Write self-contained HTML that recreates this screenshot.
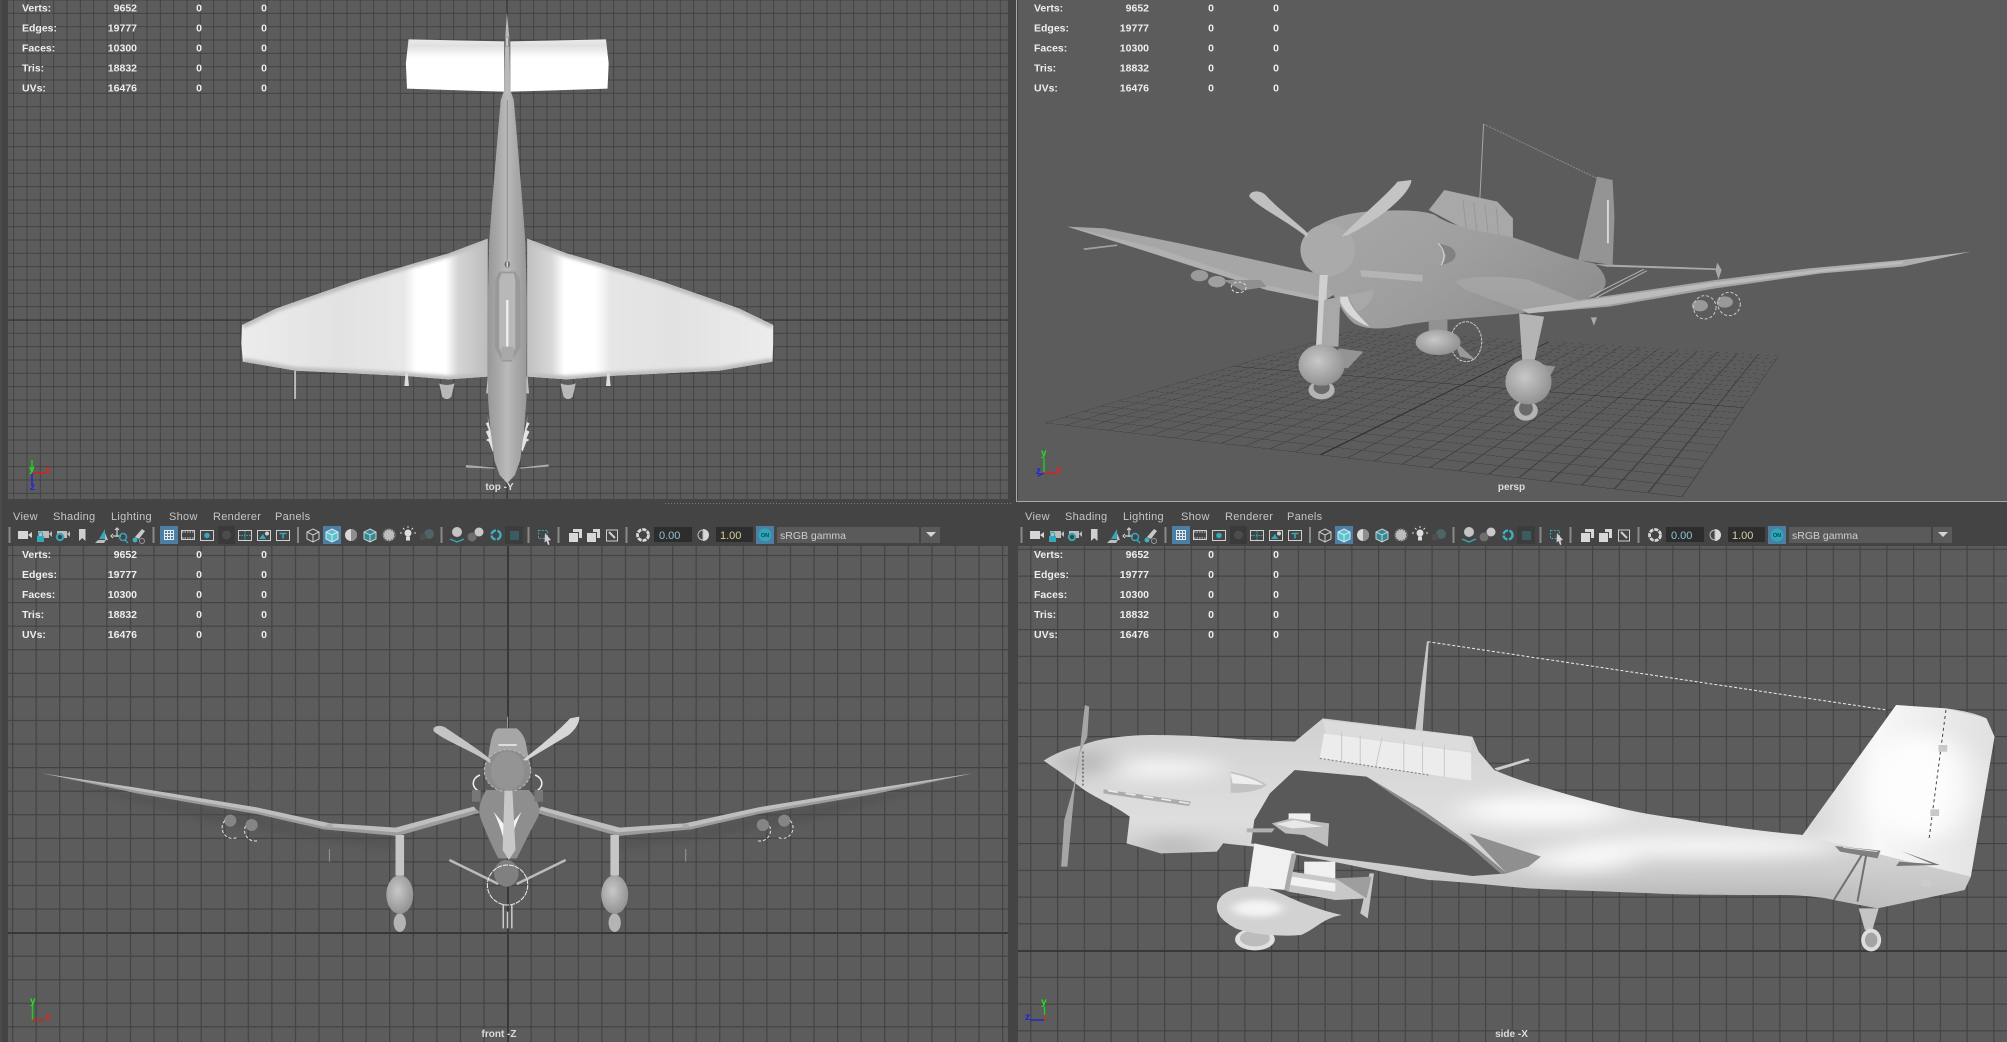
<!DOCTYPE html>
<html>
<head>
<meta charset="utf-8">
<title>Maya viewports</title>
<style>
html,body{margin:0;padding:0;width:2007px;height:1042px;overflow:hidden;background:#444;}
#vp{position:absolute;left:1018px;top:0;width:989px;height:501px;background:#5c5c5c;overflow:hidden;}
#floor{position:absolute;left:-1018px;top:0;width:721px;height:721px;transform-origin:0 0;
transform:matrix3d(1.4776,0.12597,0,0.00077333, 0.32958,-0.06139,0,-0.00033028, 0,0,1,0, 1044,423,0,1);
background-image:linear-gradient(90deg,#3e3e3e 1.7px,transparent 1.7px),linear-gradient(0deg,#3e3e3e 1.7px,transparent 1.7px);
background-size:30px 30px;background-position:0 0,0 1.7px;}
#floor i{position:absolute;background:#333;}
svg{position:absolute;left:0;top:0;}
text{font-family:"Liberation Sans",sans-serif;}
.s text,.s{font-size:10.5px;font-weight:bold;fill:#eee;}
.m{font-size:11px;fill:#c6c6c6;letter-spacing:.3px;}
.l{font-size:10px;font-weight:bold;fill:#ddd;text-anchor:middle;}
.ax{font-size:10px;font-weight:bold;}
</style>
</head>
<body>
<div id="vp"><div id="floor"><i style="left:359px;top:0;width:3px;height:721px"></i><i style="left:0;top:359px;width:721px;height:3px"></i></div></div>
<svg width="2007" height="1042" viewBox="0 0 2007 1042" xmlns="http://www.w3.org/2000/svg">
<defs>
<pattern id="g1" patternUnits="userSpaceOnUse" x="506.5" y="319.5" width="13.333" height="13.333"><rect width="1" height="13.333" fill="#434343"/><rect width="13.333" height="1" fill="#434343"/></pattern>
<pattern id="g2" patternUnits="userSpaceOnUse" x="507" y="932" width="23.57" height="23.57"><rect width="1.2" height="23.57" fill="#434343"/><rect width="23.57" height="1.2" fill="#434343"/></pattern>
<pattern id="g3" patternUnits="userSpaceOnUse" x="1057" y="950" width="26.75" height="26.75"><rect width="1.2" height="26.75" fill="#434343"/><rect width="26.75" height="1.2" fill="#434343"/></pattern>

<linearGradient id="wl" gradientUnits="userSpaceOnUse" x1="108" y1="0" x2="752" y2="0"><stop offset="0" stop-color="#ececec"/><stop offset=".4" stop-color="#e2e2e2"/><stop offset=".66" stop-color="#e8e8e8"/><stop offset=".71" stop-color="#fff"/><stop offset=".83" stop-color="#fff"/><stop offset=".88" stop-color="#d4d4d4"/><stop offset="1" stop-color="#bcbcbc"/></linearGradient>
<linearGradient id="wr" gradientUnits="userSpaceOnUse" x1="855" y1="0" x2="1498" y2="0"><stop offset="0" stop-color="#c0c0c0"/><stop offset=".1" stop-color="#d8d8d8"/><stop offset=".15" stop-color="#fff"/><stop offset=".28" stop-color="#fff"/><stop offset=".34" stop-color="#e6e6e6"/><stop offset=".6" stop-color="#e2e2e2"/><stop offset="1" stop-color="#ececec"/></linearGradient>
<linearGradient id="tp" gradientUnits="userSpaceOnUse" x1="0" y1="118" x2="0" y2="275"><stop offset="0" stop-color="#eaeaea"/><stop offset=".12" stop-color="#e0e0e0"/><stop offset=".35" stop-color="#fff"/><stop offset="1" stop-color="#fff"/></linearGradient>
<linearGradient id="fu" gradientUnits="userSpaceOnUse" x1="750" y1="0" x2="856" y2="0"><stop offset="0" stop-color="#979797"/><stop offset=".3" stop-color="#aaa"/><stop offset=".5" stop-color="#bbb"/><stop offset=".7" stop-color="#aaa"/><stop offset="1" stop-color="#979797"/></linearGradient>

<linearGradient id="pb" gradientUnits="userSpaceOnUse" x1="440" y1="330" x2="900" y2="680"><stop offset="0" stop-color="#a8a8a8"/><stop offset=".5" stop-color="#9e9e9e"/><stop offset="1" stop-color="#8c8c8c"/></linearGradient>
<linearGradient id="pw" gradientUnits="userSpaceOnUse" x1="0" y1="450" x2="0" y2="640"><stop offset="0" stop-color="#b4b4b4"/><stop offset=".5" stop-color="#a4a4a4"/><stop offset="1" stop-color="#a0a0a0"/></linearGradient>
<radialGradient id="sp" cx=".42" cy=".4" r=".7"><stop offset="0" stop-color="#c8c8c8"/><stop offset="1" stop-color="#8a8a8a"/></radialGradient>

<linearGradient id="sf" gradientUnits="userSpaceOnUse" x1="0" y1="280" x2="0" y2="860"><stop offset="0" stop-color="#d0d0d0"/><stop offset=".55" stop-color="#dedede"/><stop offset="1" stop-color="#c0c0c0"/></linearGradient>
<linearGradient id="sfin" gradientUnits="userSpaceOnUse" x1="1260" y1="0" x2="1548" y2="0"><stop offset="0" stop-color="#dadada"/><stop offset=".35" stop-color="#f8f8f8"/><stop offset="1" stop-color="#e0e0e0"/></linearGradient>
<filter id="bl" x="-30%" y="-60%" width="160%" height="220%"><feGaussianBlur stdDeviation="9"/></filter>
<filter id="bb" x="-20%" y="-30%" width="140%" height="160%"><feGaussianBlur stdDeviation="26"/></filter>
<filter id="bs" x="-10%" y="-30%" width="120%" height="160%"><feGaussianBlur stdDeviation="5"/></filter>
<clipPath id="sc"><path d="M22,422 C40,400 60,385 85,375 C110,355 150,347 190,345 C240,345 300,350 340,358 L425,365 L470,295 L710,350 L720,395 L745,450 C770,470 800,490 830,505 C900,545 970,580 1040,595 C1100,615 1180,635 1240,645 L1390,255 L1470,265 C1500,272 1520,282 1535,295 L1548,350 L1510,770 L1500,810 L1360,865 L1290,840 C1270,830 1230,825 1210,825 C1140,825 1050,825 1000,820 C930,815 860,810 800,805 C740,795 690,785 640,780 C590,765 540,745 500,730 L360,680 L310,670 L300,695 L210,700 L155,670 L160,590 C130,550 100,530 80,500 C60,470 40,445 22,422Z"/></clipPath>
<clipPath id="wcl"><path d="M110,975 L200,925 L400,845 L560,790 L650,760 L752,716 L752,1130 L650,1138 L540,1128 L250,1112 L112,1085 L108,1030 Z M1498,975 L1408,925 L1208,845 L1048,790 L958,760 L855,716 L855,1130 L958,1138 L1068,1128 L1358,1112 L1496,1085 L1498,1030 Z"/></clipPath>

<g id="tb">
 <g fill="#8a8a8a"><rect x="8.5" y="527" width="2" height="16"/><rect x="152.5" y="527" width="2" height="16"/><rect x="297" y="527" width="2" height="16"/><rect x="440.5" y="527" width="2" height="16"/><rect x="527.5" y="527" width="2" height="16"/><rect x="557.5" y="527" width="2" height="16"/><rect x="625.5" y="527" width="2" height="16"/></g>
 <path d="M18,531h10v8h-10z M28,535l4,-3v6z" fill="#d6d6d6"/>
 <path d="M38,531h11v7h-11z M49,534l3,-3v6z" fill="#bdbdbd"/>
 <path d="M37,536h7v6h-7z" fill="#36a7b8"/><path d="M38.5,536v-2a2,2 0 0 1 4,0v2" fill="none" stroke="#36a7b8" stroke-width="1.2"/>
 <path d="M57,531h10v7h-10z M67,534l3,-3v6z" fill="#bdbdbd"/><circle cx="60" cy="537" r="3.2" fill="#444" stroke="#36a7b8" stroke-width="2"/>
 <path d="M79,529h6.500v12l-3.250,-3l-3.250,3z" fill="#cfcfcf"/>
 <path d="M99,539l6,-10v10z" fill="#36a7b8"/><path d="M95,543l3,-3h8l-2,3z M105,533l3,7h-3z" fill="#bdbdbd"/>
 <path d="M113,536h8 M117,528v9 M113,534l-2,2l2,2 M115,530l2,-2l2,2" fill="none" stroke="#cfcfcf" stroke-width="1.2"/><circle cx="123" cy="537" r="3.500" fill="none" stroke="#36a7b8" stroke-width="1.500"/><path d="M125,540l3,3" stroke="#36a7b8" stroke-width="1.500"/>
 <path d="M135,537l7,-8l3,2l-6,8z" fill="#c8c8c8"/><circle cx="135" cy="540" r="2.500" fill="#3fb0bf"/><circle cx="142" cy="541" r="2.500" fill="none" stroke="#999"/>
 <rect x="160" y="526" width="18" height="18" fill="#4d7ea3"/>
 <path d="M164.500,530.500h9v9h-9z M164.500,533.500h9 M164.500,536.500h9 M167.500,530.500v9 M170.500,530.500v9" fill="none" stroke="#e8e8e8"/>
 <path d="M181.500,530.500h13v9h-13z" fill="none" stroke="#d0d0d0"/><path d="M182,532h12 M182,538h12" stroke="#d0d0d0" stroke-dasharray="1.500 1"/>
 <path d="M200.500,530.500h13v10h-13z" fill="none" stroke="#d0d0d0"/><circle cx="207" cy="535.500" r="2.800" fill="#36a7b8"/>
 <rect x="218" y="526" width="17" height="18" fill="#3a3a3a"/><circle cx="226.500" cy="535" r="4.500" fill="#4c4c4c"/>
 <path d="M238.500,530.500h13v10h-13z" fill="none" stroke="#d0d0d0"/><path d="M239,535.500h12 M245,531v9" stroke="#36a7b8" stroke-dasharray="1.500 1"/>
 <path d="M257.500,530.500h13v10h-13z" fill="none" stroke="#d0d0d0"/><path d="M259,539l4,-5l3,5z" fill="#36a7b8"/><circle cx="267" cy="533.500" r="2" fill="#d0d0d0"/>
 <path d="M276.500,530.500h13v10h-13z" fill="none" stroke="#d0d0d0"/><path d="M279.500,533.500h7 M283,533.500v5" stroke="#36a7b8" stroke-width="1.600" fill="none"/>
 <path d="M313,529l6,3v7l-6,3l-6,-3v-7z M307,532l6,3l6,-3 M313,535v7" fill="none" stroke="#cfcfcf"/>
 <rect x="323" y="526" width="18" height="18" fill="#4d7ea3"/>
 <path d="M332,529l6,3v7l-6,3l-6,-3v-7z" fill="#55c4d2" stroke="#e4e4e4"/><path d="M326,532l6,3l6,-3 M332,535v7" fill="none" stroke="#e4e4e4"/>
 <circle cx="351" cy="535" r="6" fill="#d8d8d8"/><path d="M351,529a6,6 0 0 1 0,12z" fill="#8e8e8e"/>
 <path d="M370,529l6,3v7l-6,3l-6,-3v-7z" fill="#2f8997" stroke="#cfcfcf"/><path d="M364,532l6,3l6,-3 M370,535v7" fill="none" stroke="#cfcfcf"/>
 <circle cx="389" cy="535" r="6" fill="#bcbcbc"/><circle cx="389" cy="535" r="6" fill="none" stroke="#666" stroke-dasharray="1.500 1.500" stroke-width="2"/>
 <circle cx="408" cy="533" r="3.500" fill="#ddd"/><path d="M406.500,537h3v3h-3z M402,533h-2 M416,533h-2 M403,528l1.500,1.500 M413,528l-1.500,1.500 M408,526v2" fill="#ddd" stroke="#ddd"/>
 <circle cx="429" cy="534" r="5" fill="#4d6468"/><circle cx="423" cy="537" r="3.500" fill="#4e4e4e"/>
 <circle cx="457" cy="532" r="5" fill="#c4c4c4"/><path d="M450,539l7,3l7,-3" fill="none" stroke="#36a7b8" stroke-width="1.400"/>
 <circle cx="479" cy="532" r="4.500" fill="#c8c8c8"/><circle cx="472" cy="537" r="4.500" fill="#6e6e6e"/>
 <circle cx="496" cy="535" r="4.500" fill="none" stroke="#3fb0bf" stroke-width="2.400" stroke-dasharray="6 1.500"/>
 <rect x="505" y="526" width="18" height="18" fill="#3c3c3c"/><rect x="510" y="531" width="9" height="9" fill="#3d5c62"/>
 <path d="M538.500,530.500h9v8h-9z" fill="none" stroke="#36a7b8" stroke-dasharray="2 1.300"/><path d="M545,533l6,7l-2.500,0.500l1,4l-1.500,.500l-1.500,-4l-2,1.500z" fill="#cfcfcf"/>
 <path d="M573,529h9v9h-3v-6h-6z" fill="#d8d8d8"/><rect x="569" y="533" width="9" height="9" fill="#d8d8d8"/>
 <path d="M593,529h7v9h-3v-6h-4z" fill="#d8d8d8"/><rect x="587" y="533" width="9" height="9" fill="#d8d8d8"/>
 <path d="M606.500,530h11v11h-11z" fill="none" stroke="#cfcfcf"/><path d="M609,532l6,6" stroke="#cfcfcf" stroke-width="2"/>
 <circle cx="643" cy="535" r="5.500" fill="none" stroke="#d8d8d8" stroke-width="2.800" stroke-dasharray="4 1"/>
 <rect x="654" y="527" width="38" height="15" fill="#2d2d2d"/>
 <path d="M703,529a6,6 0 0 1 0,12z" fill="#d8d8d8"/><path d="M703,530v10a5,5 0 0 1 0,-10z" fill="none" stroke="#bbb"/>
 <rect x="716" y="527" width="37" height="15" fill="#2d2d2d"/>
 <rect x="756" y="526" width="18" height="18" fill="#4d7ea3"/><circle cx="765" cy="535" r="6.500" fill="#2ea8b8"/>
 <rect x="777" y="527" width="142" height="16" fill="#5a5a5a"/>
 <rect x="921" y="527" width="19" height="16" fill="#5a5a5a"/>
 <path d="M926,532h10l-5,5z" fill="#d4d4d4"/>
</g>
</defs>

<!-- viewports -->
<rect x="8" y="0" width="1000" height="499" fill="#5c5c5c"/><rect x="8" y="0" width="1000" height="499" fill="url(#g1)"/>
<rect x="8" y="546" width="1000" height="496" fill="#5c5c5c"/><rect x="8" y="546" width="1000" height="496" fill="url(#g2)"/>
<rect x="1018" y="546" width="989" height="496" fill="#5c5c5c"/><rect x="1018" y="546" width="989" height="496" fill="url(#g3)"/>
<rect x="8" y="319.300" width="1000" height="1.500" fill="#3a3a3a"/><rect x="506.300" y="0" width="1.500" height="499" fill="#3a3a3a"/>
<rect x="8" y="932" width="1000" height="2" fill="#383838"/><rect x="507" y="546" width="2" height="496" fill="#383838"/>
<rect x="1018" y="950" width="989" height="2" fill="#383838"/>
<path d="M1016.500,0V501.500H2007" fill="none" stroke="#a8a8a8" stroke-width="1"/>
<path d="M665,503.500H1012" stroke="#7c7c7c" stroke-dasharray="1 2"/>
<rect x="0" y="0" width="2" height="1042" fill="#4c4c4c"/>

<!-- TOP VIEW -->
<g transform="translate(200,0) scale(.38265,.33333)">
 <path d="M545,118 L795,124 L795,275 L700,272 L541,266 L538,190 Z M1061,118 L811,124 L811,275 L906,272 L1065,266 L1068,190 Z" fill="url(#tp)"/>
 <path d="M110,975 L200,925 L400,845 L560,790 L650,760 L752,716 L752,1130 L650,1138 L540,1128 L250,1112 L112,1085 L108,1030 Z" fill="url(#wl)"/>
 <path d="M1498,975 L1408,925 L1208,845 L1048,790 L958,760 L855,716 L855,1130 L958,1138 L1068,1128 L1358,1112 L1496,1085 L1498,1030 Z" fill="url(#wr)"/>
 <g clip-path="url(#wcl)"><g filter="url(#bs)" fill="none" stroke="#bdbdbd" stroke-width="22">
  <path d="M110,975 L200,925 L400,845 L560,790 L650,760 L752,716"/><path d="M1498,975 L1408,925 L1208,845 L1048,790 L958,760 L855,716"/>
  <path d="M112,1085 L250,1112 L540,1128 L650,1138 L752,1130"/><path d="M1496,1085 L1358,1112 L1068,1128 L958,1138 L855,1130"/></g></g>
 <path d="M246,1112h5v85h-5z" fill="#bcbcbc"/>
 <path d="M537,1120h6l3,38h-12z M1064,1120h6l3,38h-12z" fill="#ddd"/>
 <path d="M625,1150q20,10 40,0l-8,40q-12,15 -24,0z M942,1150q20,10 40,0l-8,40q-12,15 -24,0z" fill="#b8b8b8"/>
 <path d="M748,1180l4,-50l10,0v50z M860,1180l-4,-50l-10,0v50z" fill="#c0c0c0"/>
 <path d="M695,1395l75,8v3l-75,-3z M911,1393l-75,10v3l75,-6z" fill="#aaa"/>
 <path d="M750,1245l20,100l-5,10l-10,-30l-8,-5l8,-5l-8,-20l8,-5l-8,-20l8,-5z M858,1245l-20,100l5,10l10,-30l8,-5l-8,-5l8,-20l-8,-5l8,-20l-8,-5z" fill="#e4e4e4"/>
 <path d="M802,37 L808,108 L811,270 L820,300 L829,420 L842,600 L850,720 L854,900 L853,1200 L847,1290 L837,1380 L823,1425 L803,1450 L783,1425 L769,1380 L759,1290 L753,1200 L752,900 L756,720 L764,600 L777,420 L786,300 L795,270 L798,108 Z" fill="url(#fu)"/>
 <path d="M797,110h11v30h-11z" fill="#888"/><path d="M800,112h5v26h-5z" fill="#ccc"/>
 <path d="M782,815 L824,815 L836,840 L838,1040 L815,1085 L790,1085 L770,1040 L772,840 Z" fill="#999"/>
 <path d="M788,820h32l4,20v205l-10,20h-22l-10,-20v-205z" fill="#b8b8b8"/>
 <path d="M800,900h6v140h-6z" fill="#f0f0f0"/><path d="M788,1040h32v40h-32z" fill="#a8a8a8"/>
 <ellipse cx="803" cy="793" rx="7" ry="10" fill="#6a6a6a"/><rect x="801" y="785" width="4" height="16" fill="#ddd"/>
 <path d="M803,300V780" stroke="#8e8e8e" stroke-width="1" vector-effect="non-scaling-stroke"/>
</g>

<!-- PERSP VIEW -->
<g transform="translate(1030,100) scale(.62309,.33333)">
 <path d="M728,72 L722,295" stroke="#a8a8a8" fill="none" vector-effect="non-scaling-stroke"/>
 <path d="M728,72 L910,235" stroke="#8a8a8a" fill="none" stroke-dasharray="2 1" vector-effect="non-scaling-stroke"/>
 <path d="M880,480 L910,230 L935,240 L938,350 L935,495 Z" fill="#949494"/>
 <path d="M926,300h3v130h-3z" fill="#d8d8d8"/>
 <!-- far wing -->
 <path d="M85,445 L140,433 L140,438 L88,450Z" fill="#a0a0a0"/>
 <path d="M60,380 L120,385 L240,430 L460,520 L495,575 L470,605 L380,570 L180,450 Z" fill="#a6a6a6"/>
 <path d="M60,380 L180,450 L380,570 L470,605 L478,595 L380,556 L200,442 Z" fill="#b0b0b0"/>
 <ellipse cx="272" cy="527" rx="14" ry="17" fill="#9a9a9a"/><ellipse cx="300" cy="545" rx="14" ry="17" fill="#a0a0a0"/>
 <path d="M310,540h60l10,20l-40,12z" fill="#909090"/><ellipse cx="335" cy="562" rx="12" ry="16" fill="none" stroke="#ddd" stroke-dasharray="3 2" vector-effect="non-scaling-stroke"/>
 <!-- canopy -->
 <path d="M640,330 L665,270 L750,305 L775,355 L775,415 L700,390 Z" fill="#a8a8a8"/>
 <path d="M695,300L700,388 M712,305L717,392 M730,312L735,398 M748,320L752,405" stroke="#979797" fill="none" vector-effect="non-scaling-stroke"/>
 <!-- body -->
 <path d="M438,440 C440,390 480,345 540,335 C590,328 630,330 650,345 C670,375 720,395 770,410 C810,430 850,470 905,490 C925,520 935,560 905,590 C850,620 800,640 760,645 C700,655 650,660 600,675 C570,690 540,690 520,670 C500,640 495,600 480,570 C460,540 440,490 438,440Z" fill="url(#pb)"/>
 <path d="M495,590 C500,630 520,665 545,680 C530,650 515,625 510,590Z" fill="#d8d8d8"/>
 <path d="M510,585 L552,570 C550,600 540,625 525,635 Z" fill="#a8a8a8"/>
 <ellipse cx="478" cy="450" rx="44" ry="78" fill="#aaa"/>
 <path d="M655,432a30,30 0 0 1 28,30a30,30 0 0 1 -22,32a60,60 0 0 0 6,-30z" fill="#828282"/><path d="M655,430q16,30 5,65" fill="none" stroke="#ddd" vector-effect="non-scaling-stroke"/>
 <path d="M530,510 L630,525 L630,545 L532,530 Z" fill="#b4b4b4"/>
 <!-- tailplane -->
 <path d="M905,492 L1100,505 L1100,510 L925,500Z" fill="#aaa"/><path d="M1103,488 L1110,510 L1105,538 L1100,510Z" fill="#a8a8a8"/>
 <path d="M898,590 L985,508 M905,596 L990,512" stroke="#b4b4b4" fill="none" vector-effect="non-scaling-stroke"/>
 <!-- prop -->
 <path d="M445,412 C410,360 365,320 352,290 C352,272 368,268 378,285 C400,330 430,370 446,400Z" fill="#c0c0c0"/>
 <path d="M500,410 C530,350 570,290 590,245 L612,240 C612,280 560,360 510,405Z" fill="#c4c4c4"/>
 <path d="M465,525 L478,525 L470,760 L458,775 Z" fill="#cfcfcf"/>
 <!-- near gear -->
 <path d="M472,600 L498,590 L495,740 L468,740 Z" fill="#a8a8a8"/>
 <path d="M495,745 L535,755 L510,805 L490,800Z" fill="#949494"/>
 <ellipse cx="468" cy="870" rx="21" ry="28" fill="#b4b4b4"/><ellipse cx="468" cy="862" rx="13" ry="20" fill="#6a6a6a"/>
 <ellipse cx="468" cy="795" rx="37" ry="62" fill="url(#sp)"/>
 <!-- wing near -->
 <path d="M682,545 C695,530 760,525 800,540 L880,600 L1100,540 L1250,505 L1400,480 L1510,455 L1400,500 L1270,520 L1100,565 L930,620 L800,640 L700,570 Z" fill="url(#pw)"/>
 <path d="M790,628 L880,604 L1100,546 L1270,508 L1400,484 L1400,492 L1270,516 L1100,558 L930,614 L800,640Z" fill="#bcbcbc"/>
 <path d="M900,652h10l-5,25z" fill="#aaa"/>
 <!-- bomb centre -->
 <path d="M640,660 L670,660 L670,700 L640,700 Z" fill="#929292"/>
 <path d="M680,720 L715,780 L690,770 Z" fill="#999"/>
 <ellipse cx="700" cy="725" rx="25" ry="60" fill="none" stroke="#ccc" stroke-dasharray="3 1" vector-effect="non-scaling-stroke"/>
 <ellipse cx="655" cy="727" rx="36" ry="38" fill="url(#sp)"/>
 <!-- right gear -->
 <path d="M785,640 L825,650 L810,780 L790,780 Z" fill="#b4b4b4"/>
 <path d="M825,795 L843,800 L825,860Z" fill="#949494"/>
 <ellipse cx="796" cy="932" rx="19" ry="30" fill="#b4b4b4"/><ellipse cx="796" cy="925" rx="11" ry="22" fill="#6a6a6a"/>
 <ellipse cx="800" cy="845" rx="37" ry="68" fill="url(#sp)"/>
 <!-- right bombs -->
 <ellipse cx="1075" cy="617" rx="13" ry="17" fill="#999"/><ellipse cx="1115" cy="606" rx="13" ry="17" fill="#999"/>
 <ellipse cx="1083" cy="622" rx="18" ry="35" fill="none" stroke="#ccc" stroke-dasharray="3 2" vector-effect="non-scaling-stroke"/>
 <ellipse cx="1122" cy="612" rx="18" ry="35" fill="none" stroke="#ccc" stroke-dasharray="3 2" vector-effect="non-scaling-stroke"/>
</g>

<!-- FRONT VIEW -->
<g transform="translate(30,700) scale(.61224,.33333)">
 <path d="M780,50V90" stroke="#999" vector-effect="non-scaling-stroke"/>
 <!-- soft wing shadow -->
 <g filter="url(#bl)" fill="#4e4e4e" opacity=".45"><path d="M60,250 L370,340 L480,390 L600,410 L600,450 L480,420 L300,370 Z"/><path d="M1500,250 L1190,340 L1080,390 L960,410 L960,450 L1080,420 L1260,370 Z"/></g>
 <path d="M20,220 L180,265 L370,322 L490,370 L597,383 L725,320 L735,338 L600,408 L480,388 L370,342 L180,282 Z" fill="#9c9c9c"/>
 <path d="M20,220 L180,265 L370,322 L490,370 L597,383 L725,320 L728,330 L600,397 L480,380 L370,334 L180,274 Z" fill="#bebebe"/>
 <path d="M1540,220 L1380,265 L1190,322 L1070,370 L963,383 L835,320 L825,338 L960,408 L1080,388 L1190,342 L1380,282 Z" fill="#9c9c9c"/>
 <path d="M1540,220 L1380,265 L1190,322 L1070,370 L963,383 L835,320 L832,330 L960,397 L1080,380 L1190,334 L1380,274 Z" fill="#bebebe"/>
 <circle cx="489" cy="378" r="6" fill="#aaa"/><circle cx="1071" cy="378" r="6" fill="#aaa"/>
 <!-- fuselage -->
 <path d="M752,130 C755,100 760,85 765,85 L795,85 C802,95 808,110 810,130 L818,210 L745,210 Z" fill="#a6a6a6"/>
 <path d="M765,135h30" stroke="#eee" stroke-width="1.500" vector-effect="non-scaling-stroke"/>
 <path d="M745,270 L815,270 C830,300 835,330 830,350 C815,400 805,440 795,475 L765,475 C755,440 745,400 735,350 C732,330 735,300 745,270Z" fill="#8e8e8e"/>
 <path d="M757,335 C765,365 770,390 775,430 L775,375Z M803,335 C795,365 790,390 785,430 L785,375Z" fill="#f4f4f4"/>
 <ellipse cx="780" cy="212" rx="38" ry="63" fill="#8c8c8c"/>
 <ellipse cx="780" cy="212" rx="27" ry="58" fill="#949494"/>
 <ellipse cx="780" cy="212" rx="38" ry="63" fill="none" stroke="#bbb" stroke-dasharray="3 2" vector-effect="non-scaling-stroke"/>
 <path d="M735,225 a20,28 0 0 0 0,50 M825,225 a20,28 0 0 1 0,50" fill="none" stroke="#eee" stroke-width="1.500" vector-effect="non-scaling-stroke"/>
 <path d="M722,270h14v35h-14z M824,270h14v35h-14z" fill="#777"/>
 <!-- blades -->
 <path d="M752,190 C720,150 680,125 660,95 C655,80 668,72 678,82 C700,110 735,150 752,178 Z" fill="#c4c4c4"/>
 <path d="M805,180 C835,135 865,90 882,55 L897,50 C898,70 890,90 880,105 L810,182 Z" fill="#d6d6d6"/>
 <path d="M775,272 L788,272 L793,450 L782,480 L772,450 Z" fill="#c8c8c8"/>
 <!-- gears -->
 <path d="M597,405h14v122h-14z M948,405h14v122h-14z" fill="#c6c6c6"/>
 <ellipse cx="604" cy="668" rx="10" ry="28" fill="#b4b4b4"/><ellipse cx="955" cy="668" rx="10" ry="28" fill="#b4b4b4"/>
 <ellipse cx="604" cy="584" rx="22" ry="58" fill="url(#sp)"/><ellipse cx="955" cy="584" rx="22" ry="58" fill="url(#sp)"/>
 <path d="M489,447V485 M1071,447V485" stroke="#999" vector-effect="non-scaling-stroke"/>
 <!-- bomb -->
 <path d="M685,480 L765,552 M875,480 L795,552" stroke="#bbb" stroke-width="2.500" vector-effect="non-scaling-stroke"/>
 <ellipse cx="778" cy="520" rx="20" ry="40" fill="#808080"/>
 <ellipse cx="780" cy="555" rx="33" ry="60" fill="none" stroke="#eee" stroke-dasharray="5 1" vector-effect="non-scaling-stroke"/>
 <path d="M773,612V685 M787,612V685 M780,635V685" stroke="#ccc" stroke-width="1.500" vector-effect="non-scaling-stroke"/>
 <!-- small bombs -->
 <g fill="#858585"><ellipse cx="327" cy="362" rx="10" ry="18"/><ellipse cx="362" cy="375" rx="10" ry="18"/><ellipse cx="1197" cy="375" rx="10" ry="18"/><ellipse cx="1232" cy="362" rx="10" ry="18"/></g>
 <g fill="none" stroke="#e6e6e6" stroke-dasharray="3 2"><path d="M318,362 a17,32 0 0 0 22,48 M352,378 a17,32 0 0 0 20,44 M1208,378 a17,32 0 0 1 -20,44 M1242,362 a17,32 0 0 1 -22,48" vector-effect="non-scaling-stroke"/></g>
</g>

<!-- SIDE VIEW -->
<g transform="translate(1030,620) scale(.62309,.33333)">
 <path d="M638,65 L1375,270" stroke="#eee" fill="none" stroke-dasharray="3 2" vector-effect="non-scaling-stroke"/>
 <path d="M637,65 L640,65 L630,335 L618,335 Z" fill="#c8c8c8"/>
 <path d="M745,445 L800,415 L802,422 L750,452 Z" fill="#cdcdcd"/>
 <path d="M1330,865 L1362,865 L1352,930 L1340,930 Z" fill="#c4c4c4"/>
 <ellipse cx="1350" cy="960" rx="16" ry="34" fill="#ddd"/><ellipse cx="1350" cy="960" rx="10" ry="22" fill="#a4a4a4"/>
 <ellipse cx="361" cy="958" rx="32" ry="33" fill="#e0e0e0"/><ellipse cx="361" cy="955" rx="24" ry="24" fill="#bcbcbc"/>
 <!-- fuselage -->
 <path d="M22,422 C40,400 60,385 85,375 C110,355 150,347 190,345 C240,345 300,350 340,358 L425,365 L470,295 L710,350 L720,395 L745,450 C770,470 800,490 830,505 C900,545 970,580 1040,595 C1100,615 1180,635 1240,645 L1390,255 L1470,265 C1500,272 1520,282 1535,295 L1548,350 L1510,770 L1500,810 L1360,865 L1290,840 C1270,830 1230,825 1210,825 C1140,825 1050,825 1000,820 C930,815 860,810 800,805 C740,795 690,785 640,780 C590,765 540,745 500,730 L360,680 L310,670 L300,695 L210,700 L155,670 L160,590 C130,550 100,530 80,500 C60,470 40,445 22,422Z" fill="url(#sf)"/>
 <g clip-path="url(#sc)">
  <path d="M1240,645 L1390,255 L1470,265 L1535,295 L1548,350 L1510,770 L1400,720 Z" fill="url(#sfin)"/>
  <g filter="url(#bb)" fill="#fff" opacity=".85">
   <ellipse cx="200" cy="445" rx="110" ry="26"/>
   <ellipse cx="820" cy="570" rx="130" ry="45"/>
   <ellipse cx="1080" cy="680" rx="220" ry="30"/>
   <ellipse cx="880" cy="720" rx="90" ry="34"/>
   <ellipse cx="1430" cy="500" rx="80" ry="160"/>
  </g>
  <g filter="url(#bb)" fill="#a6a6a6" opacity=".7"><ellipse cx="230" cy="680" rx="60" ry="26"/><ellipse cx="1100" cy="830" rx="240" ry="14"/><ellipse cx="90" cy="430" rx="50" ry="40"/></g>
 </g>
 <path d="M470,300 L710,352 L708,395 L475,340 Z" fill="#dcdcdc"/>
 <path d="M465,415 L472,340 L708,398 L708,482 Z" fill="#ececec"/>
 <path d="M500,335V425 M530,345V432 M565,352L555,440 M600,360V450 M630,365V458 M665,375V470" stroke="#c8c8c8" vector-effect="non-scaling-stroke"/>
 <path d="M465,415 L640,465" stroke="#777" stroke-dasharray="2 2" vector-effect="non-scaling-stroke"/>
 <!-- exhaust -->
 <path d="M118,508 L258,545 L255,558 L118,520 Z" fill="#ababab"/>
 <path d="M125,512L255,550" stroke="#eee" stroke-dasharray="10 8" stroke-width="1.500" vector-effect="non-scaling-stroke"/>
 <!-- wing cut -->
 <path d="M425,450 L540,470 L630,570 L720,690 L765,760 L710,768 L560,730 L430,700 L355,670 L360,600 L385,520 Z" fill="#595959"/>
 <path d="M705,640 L820,710 L800,740 L765,760 Z" fill="#8f8f8f"/>
 <path d="M540,470 L630,570 L720,690 L765,760 L755,760 L700,670 L610,560 Z" fill="#8a8a8a"/>
 <!-- gun -->
 <path d="M322,455 C350,465 370,480 380,495 C370,510 350,520 322,518 Z" fill="#c2c2c2"/>
 <path d="M322,460 C345,468 365,482 375,495 L325,490 Z" fill="#eee"/>
 <!-- upper bomb -->
 <path d="M415,580h35v30h-35z" fill="#efefef"/>
 <path d="M388,610 L420,595 L480,610 L478,680 L440,645 L410,640 Z" fill="#bdbdbd"/>
 <path d="M395,612 L425,600 L470,620 L420,625 Z" fill="#e8e8e8"/>
 <path d="M348,625h45l-5,12h-40z" fill="#b0b0b0"/>
 <!-- prop -->
 <path d="M88,255 L95,260 L92,350 L80,400 L72,500 L60,740 L50,740 L55,600 L70,500 L80,390 Z" fill="#a6a6a6"/>
 <path d="M85,395V500" stroke="#333" stroke-dasharray="2 2" vector-effect="non-scaling-stroke"/>
 <!-- gear -->
 <path d="M545,760 L552,760 L542,895 L530,880 Z" fill="#c8c8c8"/>
 <path d="M440,725h50v50h-50z" fill="#f0f0f0"/>
 <path d="M420,755 L490,775 L530,820 L540,835 L490,840 L415,815 Z" fill="#c8c8c8"/>
 <path d="M420,770 L490,790 L490,815 L418,795 Z" fill="#f2f2f2"/>
 <path d="M490,775 L548,770 L540,835Z" fill="#9e9e9e"/>
 <path d="M360,670 L425,695 L410,810 L350,800 Z" fill="#f0f0f0"/>
 <path d="M420,700 L428,702 L415,815 L408,810 Z" fill="#aaa"/>
 <path d="M300,860 C300,820 330,795 365,800 C400,805 420,850 500,885 C470,895 460,925 435,945 C400,950 360,945 330,925 C310,905 300,885 300,860Z" fill="#d2d2d2"/>
 <ellipse cx="365" cy="865" rx="40" ry="25" fill="#f4f4f4" filter="url(#bl)"/>
 <!-- tail details -->
 <path d="M1292,678 L1365,692 L1360,715 L1300,695Z" fill="#808080"/><path d="M1305,682L1360,695" stroke="#ddd" vector-effect="non-scaling-stroke"/>
 <path d="M1398,693 L1460,735 L1390,738 L1395,725 L1448,732 Z" fill="#777"/>
 <path d="M1335,705 L1290,840 M1342,705 L1328,845" stroke="#707070" stroke-width="2" vector-effect="non-scaling-stroke"/>
 <path d="M1470,270 L1443,655" stroke="#444" stroke-dasharray="3 3" vector-effect="non-scaling-stroke"/>
 <rect x="1458" y="375" width="14" height="20" fill="#c8c8c8"/><rect x="1445" y="568" width="14" height="20" fill="#c8c8c8"/><rect x="1430" y="780" width="16" height="20" fill="#cccccc"/>
</g>

<!-- AXES -->
<g stroke-width="1.400" fill="none">
 <path d="M32,473V460" stroke="#1fd01f"/><path d="M32,473H46" stroke="#e01c1c"/><path d="M32,473V485" stroke="#2020e0"/>
 <path d="M1044,473V458" stroke="#1fd01f"/><path d="M1044,473H1058" stroke="#e01c1c"/><path d="M1044,473L1038,476" stroke="#2020e0"/>
 <path d="M32.500,1020V1005" stroke="#1fd01f"/><path d="M32.500,1020H44" stroke="#e01c1c"/>
 <path d="M1044.500,1020V1007" stroke="#1fd01f"/><path d="M1044.500,1020H1030" stroke="#2020e0"/><path d="M1044.500,1020v-5" stroke="#e01c1c"/>
</g>
<g class="ax">
 <text x="29" y="472" fill="#25e025" class="ax">y</text><text x="45" y="473" fill="#e82020" class="ax">x</text><text x="30" y="490" fill="#2020e8" class="ax">z</text>
 <text x="1041" y="456" fill="#25e025" class="ax">y</text><text x="1056" y="473" fill="#e82020" class="ax">x</text><text x="1036" y="474" fill="#2020e8" class="ax">z</text>
 <text x="30" y="1004" fill="#25e025" class="ax">y</text><text x="45" y="1020" fill="#e82020" class="ax">x</text>
 <text x="1041" y="1005" fill="#25e025" class="ax">y</text><text x="1025" y="1020" fill="#2020e8" class="ax">z</text>
</g>

<text class="l" x="499.500" y="490">top -Y</text>
<text class="l" x="1511.500" y="490">persp</text>
<text class="l" x="499" y="1037">front -Z</text>
<text class="l" x="1511.500" y="1037">side -X</text>

<!-- TOOLBARS -->
<use href="#tb"/>
<use href="#tb" x="1012"/>
<g class="m">
 <text x="13" y="520">View</text><text x="53" y="520">Shading</text><text x="111" y="520">Lighting</text><text x="169" y="520">Show</text><text x="213" y="520">Renderer</text><text x="275" y="520">Panels</text>
 <text x="1025" y="520">View</text><text x="1065" y="520">Shading</text><text x="1123" y="520">Lighting</text><text x="1181" y="520">Show</text><text x="1225" y="520">Renderer</text><text x="1287" y="520">Panels</text>
</g>
<g style="font-size:11px">
 <text x="659" y="539" fill="#8fc3d4">0.00</text><text x="720" y="539" fill="#d8cf9c">1.00</text>
 <text x="1671" y="539" fill="#8fc3d4">0.00</text><text x="1732" y="539" fill="#d8cf9c">1.00</text>
</g>
<g style="font-size:10.500px;fill:#cfcfcf"><text x="780" y="539">sRGB gamma</text><text x="1792" y="539">sRGB gamma</text></g>
<g style="font-size:5.500px;font-weight:bold;fill:#123f47;text-anchor:middle"><text x="765" y="537">ON</text><text x="1777" y="537">ON</text></g>

<!-- STATS -->
<g class="s" transform="translate(0,-.7)">
 <text x="22" y="12">Verts:</text><text x="22" y="32">Edges:</text><text x="22" y="52">Faces:</text><text x="22" y="72">Tris:</text><text x="22" y="92">UVs:</text>
 <g text-anchor="end"><text x="137" y="12">9652</text><text x="137" y="32">19777</text><text x="137" y="52">10300</text><text x="137" y="72">18832</text><text x="137" y="92">16476</text></g>
 <g text-anchor="middle"><text x="199" y="12">0</text><text x="199" y="32">0</text><text x="199" y="52">0</text><text x="199" y="72">0</text><text x="199" y="92">0</text><text x="264" y="12">0</text><text x="264" y="32">0</text><text x="264" y="52">0</text><text x="264" y="72">0</text><text x="264" y="92">0</text></g>

 <text x="1034" y="12">Verts:</text><text x="1034" y="32">Edges:</text><text x="1034" y="52">Faces:</text><text x="1034" y="72">Tris:</text><text x="1034" y="92">UVs:</text>
 <g text-anchor="end"><text x="1149" y="12">9652</text><text x="1149" y="32">19777</text><text x="1149" y="52">10300</text><text x="1149" y="72">18832</text><text x="1149" y="92">16476</text></g>
 <g text-anchor="middle"><text x="1211" y="12">0</text><text x="1211" y="32">0</text><text x="1211" y="52">0</text><text x="1211" y="72">0</text><text x="1211" y="92">0</text><text x="1276" y="12">0</text><text x="1276" y="32">0</text><text x="1276" y="52">0</text><text x="1276" y="72">0</text><text x="1276" y="92">0</text></g>
</g>
<g class="s">
 <text x="22" y="558">Verts:</text><text x="22" y="578">Edges:</text><text x="22" y="598">Faces:</text><text x="22" y="618">Tris:</text><text x="22" y="638">UVs:</text>
 <g text-anchor="end"><text x="137" y="558">9652</text><text x="137" y="578">19777</text><text x="137" y="598">10300</text><text x="137" y="618">18832</text><text x="137" y="638">16476</text></g>
 <g text-anchor="middle"><text x="199" y="558">0</text><text x="199" y="578">0</text><text x="199" y="598">0</text><text x="199" y="618">0</text><text x="199" y="638">0</text><text x="264" y="558">0</text><text x="264" y="578">0</text><text x="264" y="598">0</text><text x="264" y="618">0</text><text x="264" y="638">0</text></g>

 <text x="1034" y="558">Verts:</text><text x="1034" y="578">Edges:</text><text x="1034" y="598">Faces:</text><text x="1034" y="618">Tris:</text><text x="1034" y="638">UVs:</text>
 <g text-anchor="end"><text x="1149" y="558">9652</text><text x="1149" y="578">19777</text><text x="1149" y="598">10300</text><text x="1149" y="618">18832</text><text x="1149" y="638">16476</text></g>
 <g text-anchor="middle"><text x="1211" y="558">0</text><text x="1211" y="578">0</text><text x="1211" y="598">0</text><text x="1211" y="618">0</text><text x="1211" y="638">0</text><text x="1276" y="558">0</text><text x="1276" y="578">0</text><text x="1276" y="598">0</text><text x="1276" y="618">0</text><text x="1276" y="638">0</text></g>
</g>
</svg>
</body>
</html>
